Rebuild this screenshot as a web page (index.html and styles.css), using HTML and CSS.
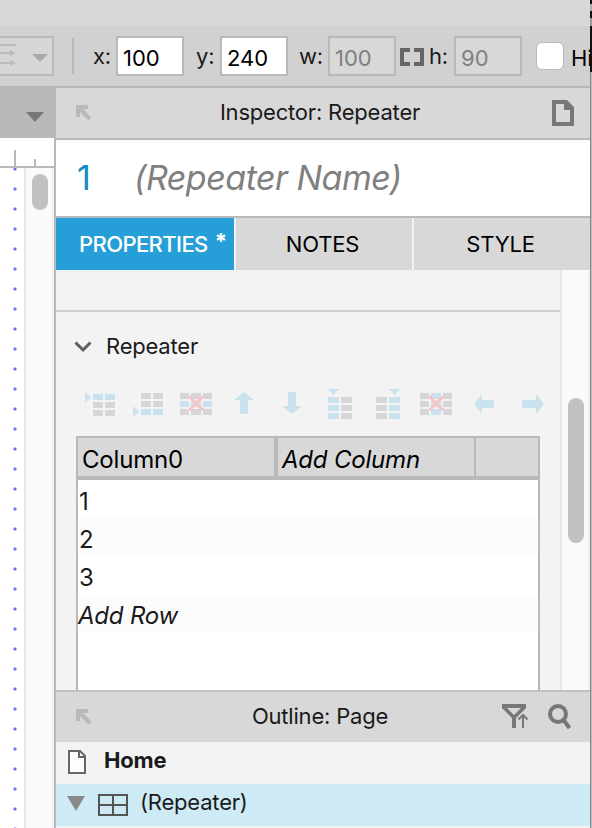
FILE: index.html
```html
<!DOCTYPE html>
<html lang="en">
<head>
  <meta charset="UTF-8" />
  <meta name="viewport" content="width=device-width, initial-scale=1.0"/>
  <title>Inspector: Repeater</title>
  <link rel="stylesheet" href="styles.css">
</head>
<body>

  <div class="window">
    <div class="titlebar"></div>

    <div class="toolbar">
      <div class="dropdown">
        <svg width="52" height="36" viewBox="0 0 52 36">
          <path d="M0 7h16M0 15h12M0 25h12" fill="none" stroke="#bbb" stroke-width="2"/>
          <path d="M10 12l6 3-6 3zM10 22l6 3-6 3z" fill="#bbb"/>
          <path d="M32 16h16l-8 8z" fill="#aaa"/>
        </svg>
      </div>
      <div class="separator"></div>
      <span class="label label-x">x:</span>
      <div class="field">100</div>
      <span class="label label-y">y:</span>
      <div class="field">240</div>
      <span class="label label-w">w:</span>
      <div class="field disabled">100</div>
      <svg class="link-icon" width="24" height="18" viewBox="0 0 24 18">
        <path d="M10 2H2v14h8M14 2h8v14h-8" fill="none" stroke="#666" stroke-width="4"/>
      </svg>
      <span class="label label-h">h:</span>
      <div class="field disabled">90</div>
      <div class="checkbox"></div>
      <span class="hidden-label">Hi</span>
    </div>

    <div class="main">
      <!-- Canvas edge -->
      <div class="canvas-side">
        <div class="page-tab">
          <svg width="18" height="10" viewBox="0 0 18 10"><path d="M0 0h18L9 10z" fill="#777"/></svg>
        </div>
        <div class="ruler">
          <span class="tick tall"></span>
          <span class="tick"></span>
        </div>
        <div class="canvas">
          <div class="dots"></div>
          <div class="scrollbar"><div class="thumb"></div></div>
        </div>
      </div>

      <!-- Panels -->
      <div class="panels">
        <div class="panel-header">
          <svg class="collapse" width="16" height="16" viewBox="0 0 16 16"><path d="M0 0h12v4H7l8.500 8.500-3 3L4 7v5H0z" fill="#b9b9b9"/></svg>
          <span class="panel-title">Inspector: Repeater</span>
          <svg class="page-icon" width="22" height="26" viewBox="0 0 22 26"><path d="M0 0h15l7 7v19H0zM4 4v18h14V10h-6V4z" fill="#777" fill-rule="evenodd"/></svg>
        </div>

        <div class="name-row">
          <span class="number">1</span>
          <span class="name">(Repeater Name)</span>
        </div>

        <div class="tabs">
          <div class="tab active">PROPERTIES<span class="star">*</span></div>
          <div class="tab">NOTES</div>
          <div class="tab">STYLE</div>
        </div>

        <div class="inspector">
          <div class="content">
            <div class="section-head">
              <svg width="18" height="12" viewBox="0 0 18 12"><path d="M1.500 1.500L9 9l7.500-7.500" fill="none" stroke="#5c5e66" stroke-width="3"/></svg>
              <span>Repeater</span>
            </div>

            <div class="row-tools">
              <svg width="48" height="32" viewBox="0 0 48 32">
                <path class="blue" d="M9 4l6 5.500L9 15zM17 6h10v6H17zM29 6h10v6H29z"/>
                <path class="gray" d="M17 14h10v6H17zM29 14h10v6H29zM17 22h10v6H17zM29 22h10v6H29z"/>
              </svg>
              <svg width="48" height="32" viewBox="0 0 48 32">
                <path class="blue" d="M9 18l6 5.500L9 29zM17 21h10v6H17zM29 21h10v6H29z"/>
                <path class="gray" d="M17 5h10v6H17zM29 5h10v6H29zM17 13h10v6H17zM29 13h10v6H29z"/>
              </svg>
              <svg width="48" height="32" viewBox="0 0 48 32">
                <path class="gray" d="M8 5h9v6H8zM19 5h10v6H19zM31 5h9v6h-9zM8 21h9v6H8zM19 21h10v6H19zM31 21h9v6h-9z"/>
                <path class="blue" d="M8 13h9v6H8zM19 13h10v6H19zM31 13h9v6h-9z"/>
                <path class="cross" d="M17.500 8.500l13.500 13.500M31 8.500L17.500 22"/>
              </svg>
              <svg width="48" height="32" viewBox="0 0 48 32"><path class="blue" d="M24 4l10 8h-6v14h-8V12h-6z"/></svg>
              <svg width="48" height="32" viewBox="0 0 48 32"><path class="blue" d="M24 26l10-8h-6V4h-8v14h-6z"/></svg>
              <svg width="48" height="32" viewBox="0 0 48 32">
                <path class="blue" d="M12 1h11l-5.500 6zM12 9h11v6H12zM12 17h11v6H12zM12 25h11v6H12z"/>
                <path class="gray" d="M25 9h11v6H25zM25 17h11v6H25zM25 25h11v6H25z"/>
              </svg>
              <svg width="48" height="32" viewBox="0 0 48 32">
                <path class="gray" d="M12 9h11v6H12zM12 17h11v6H12zM12 25h11v6H12z"/>
                <path class="blue" d="M25 1h11l-5.500 6zM25 9h11v6H25zM25 17h11v6H25zM25 25h11v6H25z"/>
              </svg>
              <svg width="48" height="32" viewBox="0 0 48 32">
                <path class="gray" d="M8 5h9v6H8zM8 13h9v6H8zM8 21h9v6H8zM31 5h9v6h-9zM31 13h9v6h-9zM31 21h9v6h-9z"/>
                <path class="blue" d="M19 5h10v6H19zM19 13h10v6H19zM19 21h10v6H19z"/>
                <path class="cross" d="M17.500 8.500l13.500 13.500M31 8.500L17.500 22"/>
              </svg>
              <svg width="48" height="32" viewBox="0 0 48 32"><path class="blue" d="M14 16l8-10v6h12v8H22v6z"/></svg>
              <svg width="48" height="32" viewBox="0 0 48 32"><path class="blue" d="M36 16l-8-10v6H14v8h14v6z"/></svg>
            </div>

            <div class="grid">
              <div class="grid-head">
                <div class="cell">Column0</div>
                <div class="cell add"><i>Add Column</i></div>
                <div class="cell rest"></div>
              </div>
              <div class="grid-row">1</div>
              <div class="grid-row">2</div>
              <div class="grid-row">3</div>
              <div class="grid-row add-row"><i>Add Row</i></div>
            </div>
          </div>
          <div class="scrollbar"><div class="thumb"></div></div>
        </div>

        <div class="panel-header outline-header">
          <svg class="collapse" width="16" height="16" viewBox="0 0 16 16"><path d="M0 0h12v4H7l8.500 8.500-3 3L4 7v5H0z" fill="#b9b9b9"/></svg>
          <span class="panel-title">Outline: Page</span>
          <svg class="filter-icon" width="28" height="26" viewBox="0 0 28 26">
            <path d="M0 0h24v4L14 14v10h-4V14L0 4zM5 4l7 7 7-7z" fill="#777" fill-rule="evenodd"/>
            <path d="M21 24V11M16.500 15.500L21 11l4.500 4.500" fill="none" stroke="#d8d8d8" stroke-width="4"/>
            <path d="M21 24V11M16.500 15.500L21 11l4.500 4.500" fill="none" stroke="#777" stroke-width="2"/>
          </svg>
          <svg class="search-icon" width="24" height="26" viewBox="0 0 24 26">
            <circle cx="10" cy="10" r="8" fill="none" stroke="#777" stroke-width="4"/>
            <path d="M15.500 16l6 8" stroke="#777" stroke-width="4"/>
          </svg>
        </div>
        <div class="tree-row">
          <svg class="file-icon" width="18" height="24" viewBox="0 0 18 24">
            <path d="M1 1h11l5 5v17H1z" fill="#fdfdfd" stroke="#666" stroke-width="2"/>
            <path d="M11 1v6h6" fill="none" stroke="#666" stroke-width="2"/>
          </svg>
          <b>Home</b>
        </div>
        <div class="tree-row selected">
          <svg class="toggle" width="18" height="15" viewBox="0 0 18 15"><path d="M0 0h18L9 15z" fill="#8a8a8a"/></svg>
          <svg class="repeater-icon" width="30" height="22" viewBox="0 0 30 22"><path d="M1 1h28v20H1zM15 1v20M1 11h28" fill="none" stroke="#555" stroke-width="2"/></svg>
          <span>(Repeater)</span>
        </div>
      </div>
    </div>
  </div>
  <div class="edge"></div>

</body>
</html>
```
FILE: styles.css
```css
* {
  box-sizing: border-box;
}

body {
  margin: 0;
  width: 592px;
  height: 828px;
  display: flex;
  overflow: hidden;
  background: #f3f3f3;
  font-family: Inter, "Liberation Sans", sans-serif;
  font-size: 22px;
  letter-spacing: -0.2px;
  color: #1a1a1a;
}

svg {
  display: block;
  flex: none;
}

.window {
  width: 590px;
  height: 828px;
  overflow: hidden;
  flex: none;
}

.edge {
  width: 2px;
  background: linear-gradient(#111 0 4px, #aaa 4px 11px, #111 11px 18px, #999 18px 26px, #111 26px 72px, transparent 72px),
    linear-gradient(90deg, #888 0 1px, #bbb 1px);
}

.titlebar {
  height: 26px;
  background: #d8d8d8;
}

/* Toolbar */
.toolbar {
  height: 62px;
  padding-top: 10px;
  display: flex;
  align-items: flex-start;
  background: #d1d1d1;
  border-bottom: 2px solid #b9b9b9;
  white-space: nowrap;
}

.dropdown {
  flex: none;
  width: 54px;
  height: 40px;
  border: 2px solid #b9b9b9;
  border-left: none;
  background: #d6d6d6;
}

.separator {
  flex: none;
  width: 2px;
  height: 36px;
  margin: 2px 0 0 18px;
  background: #b9b9b9;
}

.label {
  line-height: 41px;
  flex: none;
}

.label-x { width: 42px; padding-left: 19px; }
.label-y { width: 36px; padding-left: 12px; }
.label-w { width: 40px; padding-left: 11px; }
.label-h { width: 30px; padding-left: 5px; }

.field {
  flex: none;
  width: 68px;
  height: 40px;
  padding-left: 5px;
  border: 2px solid #b9b9b9;
  background: #fff;
  color: #000;
  letter-spacing: 0;
  line-height: 40px;
}

.field.disabled {
  background: #d8d8d8;
  color: #808080;
}

.link-icon {
  margin: 12px 0 0 4px;
}

.checkbox {
  flex: none;
  width: 28px;
  height: 28px;
  margin: 6px 0 0 14px;
  border: 1px solid #b9b9b9;
  border-radius: 6px;
  background: #fff;
}

.hidden-label {
  padding-left: 7px;
  line-height: 45px;
  color: #000;
}

.main {
  display: flex;
  height: 740px;
}

/* Canvas edge */
.canvas-side {
  width: 56px;
  flex: none;
  display: flex;
  flex-direction: column;
  border-right: 2px solid #b9b9b9;
}

.page-tab {
  height: 50px;
  padding: 24px 0 0 26px;
  background: #b9b9b9;
}

.ruler {
  height: 30px;
  padding-left: 14px;
  display: flex;
  align-items: flex-end;
  gap: 18px;
  background: #fff;
  border-bottom: 2px solid #b9b9b9;
}

.tick {
  width: 2px;
  height: 7px;
  background: #b9b9b9;
}

.tick.tall {
  height: 16px;
}

.canvas {
  flex: 1;
  display: flex;
}

.dots {
  width: 24px;
  background: #fff radial-gradient(circle at 15px 11px, #6674ff 0 1px, #fff 2.2px) 0 -10px / 24px 20px;
}

.scrollbar {
  width: 30px;
  flex: none;
  padding-left: 6px;
  border-left: 2px solid #e7e7e7;
  border-right: 2px solid #f0f0f0;
  background: #fafafa;
}

.thumb {
  width: 16px;
  height: 36px;
  margin-top: 6px;
  border-radius: 8px;
  background: #c1c1c1;
}

/* Panels */
.panels {
  width: 534px;
  flex: none;
}

.panel-header {
  height: 52px;
  display: flex;
  align-items: center;
  background: #d8d8d8;
  border-bottom: 2px solid #b9b9b9;
}

.collapse {
  margin: -1px 0 0 20px;
}

.panel-title {
  width: 400px;
  margin-left: 28px;
  padding-bottom: 2px;
  text-align: center;
}

.page-icon {
  margin-left: 32px;
}

.name-row {
  height: 78px;
  display: flex;
  padding-left: 20px;
  background: #fff;
  border-bottom: 2px solid #b9b9b9;
  font-size: 34px;
  letter-spacing: -0.5px;
  line-height: 75px;
}

.number {
  width: 58px;
  padding-left: 1px;
  color: #148bbd;
}

.name {
  font-style: italic;
  color: #808080;
}

.tabs {
  height: 52px;
  display: flex;
  gap: 2px;
}

.tab {
  flex: none;
  width: 176px;
  padding-right: 3px;
  background: #d8d8d8;
  color: #000;
  text-align: center;
  line-height: 53px;
}

.tab.active {
  width: 178px;
  padding-left: 23px;
  background: #269fd8;
  color: #fff;
  font-weight: 500;
  letter-spacing: -0.6px;
  text-align: left;
}

.star {
  margin-left: 7px;
  font-weight: 700;
  line-height: 1;
  vertical-align: 3px;
}

.inspector {
  height: 420px;
  display: flex;
}

.inspector .thumb {
  height: 145px;
  margin-top: 128px;
}

.content {
  width: 504px;
  height: 420px;
  padding-top: 40px;
  display: flex;
  flex-direction: column;
}

.section-head {
  height: 78px;
  padding: 0 0 7px 18px;
  display: flex;
  align-items: center;
  gap: 14px;
  border-top: 2px solid #d1d1d1;
}

.section-head span {
  padding-bottom: 2px;
}

.row-tools {
  height: 32px;
  padding-left: 20px;
  display: flex;
}

.blue { fill: #c9e2ee; }
.gray { fill: #d6d6d6; }

.cross {
  fill: none;
  stroke: #f8c3c5;
  stroke-width: 3;
}

.grid {
  flex: 1;
  width: 464px;
  margin: 16px 0 0 20px;
  background: #fff;
  border: 2px solid #b9b9b9;
  border-bottom: none;
  font-size: 24px;
}

.grid-head {
  height: 42px;
  display: flex;
  background: #d8d8d8;
  border-bottom: 4px solid #b9b9b9;
  color: #000;
}

.cell {
  width: 200px;
  padding-left: 4px;
  border-right: 4px solid #b9b9b9;
  line-height: 43px;
}

.cell.add {
  width: 198px;
  border-right-width: 2px;
}

.cell.rest {
  width: 62px;
  border: none;
}

.grid-row {
  height: 38px;
  padding-left: 1px;
  line-height: 43px;
}

.grid-row.add-row {
  padding-left: 0;
}

.grid-row:nth-child(odd) {
  background: #fcfcfc;
}

/* Outline */
.outline-header {
  border-top: 2px solid #c1c1c1;
  border-bottom: none;
}

.filter-icon {
  margin: 0 0 0 -18px;
}

.search-icon {
  margin-left: 18px;
}

.tree-row {
  height: 42px;
  display: flex;
  line-height: 37px;
}

.tree-row.selected {
  background: #cdeaf5;
  line-height: 37px;
}

.file-icon {
  margin: 8px 18px 0 12px;
}

.toggle {
  margin: 12px 13px 0 11px;
}

.repeater-icon {
  margin: 10px 12px 0 0;
}
```
